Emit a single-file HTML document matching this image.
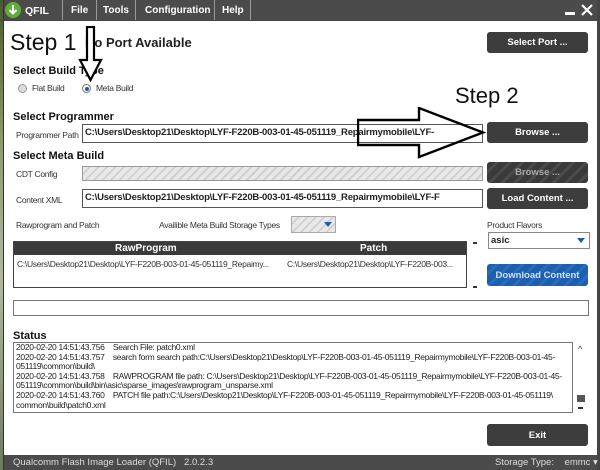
<!DOCTYPE html>
<html><head><meta charset="utf-8"><style>
*{margin:0;padding:0;box-sizing:border-box}
body{width:600px;height:470px;overflow:hidden;background:#fff;font-family:"Liberation Sans",sans-serif;position:relative}
.a{position:absolute}
.h{position:absolute;font-weight:bold;font-size:11px;color:#111}
.l{position:absolute;font-size:8.5px;color:#333;letter-spacing:-0.3px}
.btn{position:absolute;background:#3d3d3d;border-radius:3px;color:#fff;font-weight:bold;font-size:9.5px;display:flex;align-items:center;justify-content:center}
.inp{position:absolute;border:1px solid #555;background:#fff;font-size:9.5px;font-weight:bold;color:#222;padding:2px 2px;white-space:nowrap;overflow:hidden;letter-spacing:-0.2px}
.hatch{background:repeating-linear-gradient(135deg,#e8e8e8 0 4px,#d0d0d0 4px 6px)}
.menu{position:absolute;top:0;height:20px;color:#fff;font-weight:bold;font-size:10px;line-height:22px}
.sep{position:absolute;top:0;width:1px;height:20px;background:#9a9a9a}
.st{font-size:8.5px;color:#222;line-height:9.6px;letter-spacing:-0.3px;white-space:nowrap}
</style></head><body>
<div class="a" style="left:0;top:0;width:4px;height:470px;background:linear-gradient(#4a5a30,#8c9a70 30%,#b0b8a0 60%,#707a60)"></div>
<div class="a" style="left:3px;top:0;width:1px;height:470px;background:#333"></div>
<div class="a" style="left:597px;top:0;width:3px;height:470px;background:#444"></div>
<!-- title bar -->
<div class="a" style="left:4px;top:0;width:593px;height:20px;background:#4b4b4b"></div>
<div class="a" style="left:0;top:20px;width:600px;height:1px;background:#444"></div>
<div class="a" style="left:5px;top:2px;width:16px;height:16px;border-radius:50%;background:#5fae3a"></div>
<svg class="a" style="left:5px;top:2px" width="16" height="16"><path d="M8 3v8M4.5 8L8 11.5 11.5 8" stroke="#fff" stroke-width="2" fill="none"/></svg>
<div class="menu" style="left:25px;font-size:10.5px">QFIL</div>
<div class="sep" style="left:62px"></div>
<div class="menu" style="left:71px">File</div>
<div class="sep" style="left:96px"></div>
<div class="menu" style="left:103px">Tools</div>
<div class="sep" style="left:135px"></div>
<div class="menu" style="left:145px">Configuration</div>
<div class="sep" style="left:214px"></div>
<div class="menu" style="left:222px">Help</div>
<div class="sep" style="left:250px"></div>
<div class="a" style="left:565px;top:12px;width:10px;height:3px;background:#fff"></div>
<svg class="a" style="left:580px;top:3px" width="14" height="14"><path d="M2 2L12 12M12 2L2 12" stroke="#fff" stroke-width="2.2"/></svg>

<div class="a" style="left:10px;top:29px;font-size:23px;color:#111">Step 1</div>
<div class="a" style="left:85px;top:35px;font-size:13px;font-weight:bold;color:#222">No Port Available</div>
<div class="btn" style="left:487px;top:32px;width:101px;height:21px">Select Port ...</div>
<div class="h" style="left:13px;top:65px">Select Build Type</div>
<div class="a" style="left:18px;top:84px;width:9px;height:9px;border-radius:50%;border:1px solid #999;background:#ddd"></div>
<div class="l" style="left:32px;top:83px">Flat Build</div>
<div class="a" style="left:82px;top:84px;width:9px;height:9px;border-radius:50%;border:1px solid #777;background:#fff"></div>
<div class="a" style="left:84.5px;top:86.5px;width:4px;height:4px;border-radius:50%;background:#1a5a9a"></div>
<div class="l" style="left:96px;top:83px">Meta Build</div>
<!-- down arrow -->
<svg class="a" style="left:78px;top:26px" width="26" height="56"><path d="M9 1H16V34H23L12.5 54L2 34H9Z" fill="#fff" stroke="#000" stroke-width="2.2"/></svg>

<div class="a" style="left:455px;top:83px;font-size:22px;color:#111">Step 2</div>
<div class="h" style="left:13px;top:111px">Select Programmer</div>
<div class="l" style="left:16px;top:130px">Programmer Path</div>
<div class="inp" style="left:82px;top:124px;width:401px;height:19px">C:\Users\Desktop21\Desktop\LYF-F220B-003-01-45-051119_Repairmymobile\LYF-</div>
<div class="btn" style="left:487px;top:122px;width:101px;height:21px">Browse ...</div>
<svg class="a" style="left:357px;top:107px" width="130" height="52"><path d="M1 13H62V1L126 25.5L62 50V38H1Z" fill="none" stroke="#000" stroke-width="2.4"/></svg>

<div class="h" style="left:13px;top:150px">Select Meta Build</div>
<div class="l" style="left:16px;top:169px">CDT Config</div>
<div class="a hatch" style="left:82px;top:166px;width:401px;height:15px;border:1px solid #999"></div>
<div class="btn" style="left:487px;top:162px;width:101px;height:21px;background:repeating-linear-gradient(135deg,#3a3a3a 0 6px,#4a4a4a 6px 9px);color:#aaa">Browse ...</div>
<div class="l" style="left:16px;top:195px">Content XML</div>
<div class="inp" style="left:82px;top:189px;width:401px;height:19px">C:\Users\Desktop21\Desktop\LYF-F220B-003-01-45-051119_Repairmymobile\LYF-F</div>
<div class="btn" style="left:487px;top:188px;width:101px;height:21px">Load Content ...</div>
<div class="l" style="left:16px;top:220px">Rawprogram and Patch</div>
<div class="l" style="left:159px;top:220px">Availible Meta Build Storage Types</div>
<div class="a hatch" style="left:291px;top:216px;width:45px;height:17px;border:1px solid #aaa"></div>
<div class="a" style="left:324px;top:222px;width:0;height:0;border-left:4px solid transparent;border-right:4px solid transparent;border-top:5px solid #1a5fa8"></div>
<div class="l" style="left:487px;top:220px">Product Flavors</div>
<div class="a" style="left:488px;top:232px;width:102px;height:17px;border:1px solid #888;background:#fff;font-size:9.5px;font-weight:bold;padding:2px 2px;color:#222">asic</div>
<div class="a" style="left:577px;top:238px;width:0;height:0;border-left:4px solid transparent;border-right:4px solid transparent;border-top:5px solid #1a5fa8"></div>
<div class="a" style="left:473px;top:242px;width:4px;height:2px;background:#333"></div>
<div class="a" style="left:473px;top:286px;width:4px;height:2px;background:#333"></div>
<!-- table -->
<div class="a" style="left:13px;top:241px;width:454px;height:47px;border:1px solid #444;background:#fff"></div>
<div class="a" style="left:14px;top:242px;width:452px;height:13px;background:#3a3a3a"></div>
<div class="a" style="left:115px;top:242px;color:#fff;font-weight:bold;font-size:10px;line-height:13px">RawProgram</div>
<div class="a" style="left:360px;top:242px;color:#fff;font-weight:bold;font-size:10px;line-height:13px">Patch</div>
<div class="l" style="left:17px;top:259px;color:#333">C:\Users\Desktop21\Desktop\LYF-F220B-003-01-45-051119_Repaimy...</div>
<div class="l" style="left:287px;top:259px;color:#333">C:\Users\Desktop21\Desktop\LYF-F220B-003...</div>
<div class="btn" style="left:487px;top:264px;width:101px;height:22px;background:repeating-linear-gradient(135deg,#1c5fae 0 6px,#2a6cbc 6px 9px);color:#cfe0f5">Download Content</div>
<div class="a" style="left:13px;top:300px;width:576px;height:16px;border:1px solid #777;background:#fff"></div>

<div class="h" style="left:13px;top:330px">Status</div>
<div class="a" style="left:13px;top:342px;width:560px;height:71px;border:1px solid #777;background:#fff;padding:0 2px;overflow:hidden">
<div class="st">2020-02-20 14:51:43.756&nbsp;&nbsp;&nbsp;&nbsp;Search File: patch0.xml</div>
<div class="st">2020-02-20 14:51:43.757&nbsp;&nbsp;&nbsp;&nbsp;search form search path:C:\Users\Desktop21\Desktop\LYF-F220B-003-01-45-051119_Repairmymobile\LYF-F220B-003-01-45-</div>
<div class="st">051119\common\build\</div>
<div class="st">2020-02-20 14:51:43.758&nbsp;&nbsp;&nbsp;&nbsp;RAWPROGRAM file path: C:\Users\Desktop21\Desktop\LYF-F220B-003-01-45-051119_Repairmymobile\LYF-F220B-003-01-45-</div>
<div class="st">051119\common\build\bin\asic\sparse_images\rawprogram_unsparse.xml</div>
<div class="st">2020-02-20 14:51:43.760&nbsp;&nbsp;&nbsp;&nbsp;PATCH file path:C:\Users\Desktop21\Desktop\LYF-F220B-003-01-45-051119_Repairmymobile\LYF-F220B-003-01-45-051119\</div>
<div class="st">common\build\patch0.xml</div>
</div>
<div class="a" style="left:578px;top:344px;font-size:9px;color:#333">^</div>
<div class="a" style="left:577px;top:395px;width:8px;height:7px;background:#555"></div>
<div class="a" style="left:578px;top:407px;width:5px;height:2px;background:#333"></div>
<div class="btn" style="left:487px;top:424px;width:101px;height:22px">Exit</div>
<!-- bottom bar -->
<div class="a" style="left:4px;top:455px;width:593px;height:15px;background:#4b4b4b"></div>
<div class="a" style="left:13px;top:457px;color:#ddd;font-size:9.5px">Qualcomm Flash Image Loader (QFIL)&nbsp;&nbsp;&nbsp;2.0.2.3</div>
<div class="a" style="left:495px;top:457px;color:#ddd;font-size:9.5px">Storage Type:&nbsp;&nbsp;&nbsp;&nbsp;emmc ▾</div>
</body></html>
